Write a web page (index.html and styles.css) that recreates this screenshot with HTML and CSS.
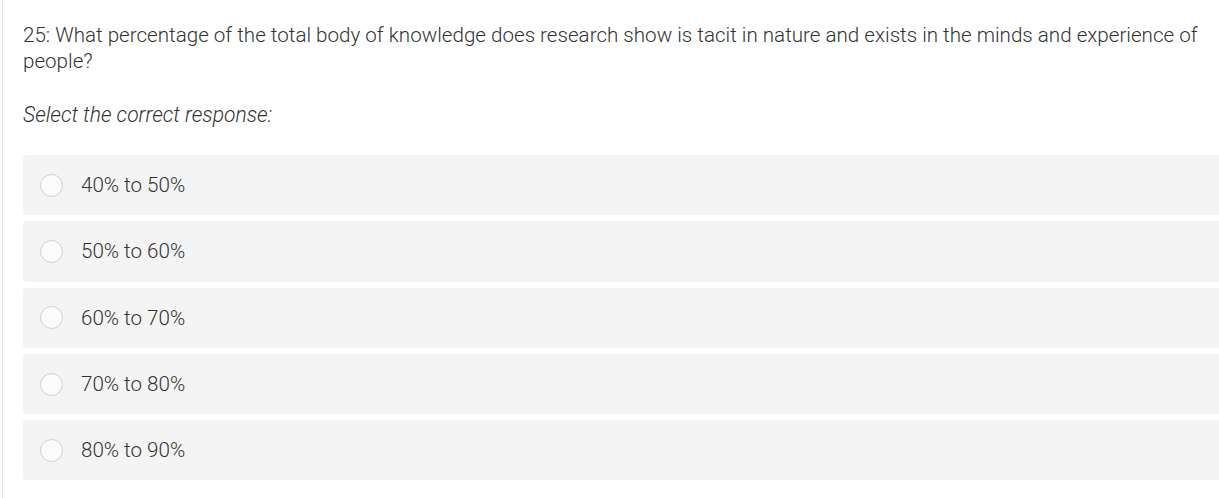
FILE: index.html
```html
<!DOCTYPE html>
<html>
	<head>
		<meta charset="UTF-8">
		<title>Question 25</title>
		<link rel="stylesheet" href="styles.css">
	</head>
	<body>
		<div class="quiz">
			<div class="question">25: What percentage of the total body of knowledge does research show is tacit in nature and exists in the minds and experience of people?</div>
			<div class="prompt">Select the correct response:</div>
			<div class="answers">
				<label class="answer"><span class="radio"></span><span class="answer_text">40% to 50%</span></label>
				<label class="answer"><span class="radio"></span><span class="answer_text">50% to 60%</span></label>
				<label class="answer"><span class="radio"></span><span class="answer_text">60% to 70%</span></label>
				<label class="answer"><span class="radio"></span><span class="answer_text">70% to 80%</span></label>
				<label class="answer"><span class="radio"></span><span class="answer_text">80% to 90%</span></label>
			</div>
		</div>
	</body>
</html>
```

FILE: styles.css
```css
*{margin: 0;padding: 0;box-sizing: border-box;}
body{
	background: #fff;
	font-family: Roboto, "Liberation Sans", sans-serif;
	font-weight: 300;
	font-size: 20.6px;
	color: #333;
}
.quiz{
	margin-left: 2px;
	min-height: 498px;
	border-left: 1px solid #e2e2e2;
	padding: 22px 0 0 20px;
}
.question{
	line-height: 26px;
	padding-right: 10px;
}
.prompt{
	font-style: italic;
	font-size: 21.1px;
	margin-top: 28px;
}
.answers{
	margin-top: 28px;
	display: flex;
	flex-direction: column;
	gap: 6px;
}
.answer{
	display: flex;
	align-items: center;
	height: 60.3px;
	background: #f4f4f4;
	border-radius: 3px 0 0 3px;
	padding-left: 17px;
}
.radio{
	width: 23px;
	height: 23px;
	border: 1px solid #cfcfcf;
	border-radius: 50%;
	background: #fbfbfb;
	margin-right: 18px;
}
```
